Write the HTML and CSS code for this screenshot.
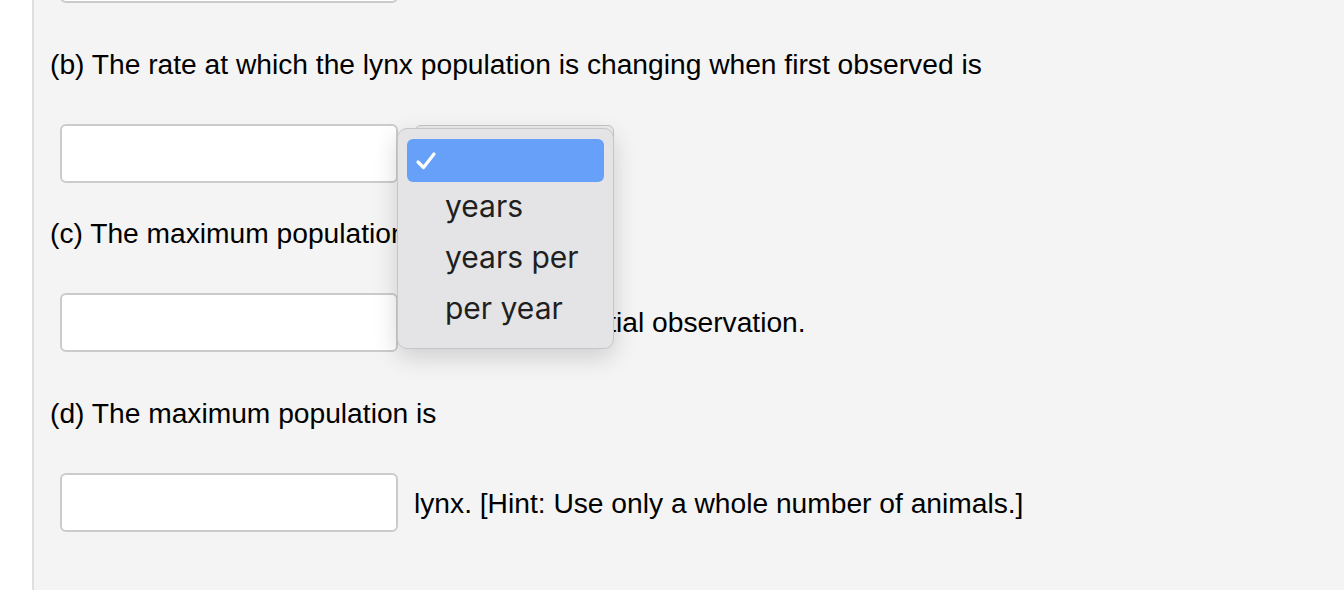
FILE: index.html
```html
<!DOCTYPE html>
<html lang="en">
<head>
    <meta charset="UTF-8">
    <meta name="viewport" content="width=device-width, initial-scale=1.0">
    <title>Lynx population</title>
    <link rel="stylesheet" href="styles.css">
</head>
<body>
    <div class="page">
        <div class="gutter"></div>

        <main class="panel">
            <div class="answer-row answer-row--cut">
                <input type="text" class="answer">
            </div>

            <p class="prompt">(b) The rate at which the lynx population is changing when first observed is</p>

            <div class="answer-row answer-row--menu">
                <input type="text" class="answer">
                <div class="unit-select">
                    <!-- open popup of the units select -->
                    <div class="unit-menu">
                        <div class="unit-option unit-option--checked">
                            <svg class="check" width="22" height="22" viewBox="0 0 22 22">
                                <path d="M3 12 L8.5 17.5 L19 4" fill="none" stroke="#fff" stroke-width="3.2" stroke-linecap="round" stroke-linejoin="round"/>
                            </svg>
                        </div>
                        <div class="unit-list">
                            <div class="unit-option">years</div>
                            <div class="unit-option">years per</div>
                            <div class="unit-option">per year</div>
                        </div>
                    </div>
                </div>
            </div>

            <p class="prompt">(c) The maximum population occurs</p>

            <div class="answer-row">
                <input type="text" class="answer">
                <span class="after after--under-menu">years after initial observation.</span>
            </div>

            <p class="prompt">(d) The maximum population is</p>

            <div class="answer-row">
                <input type="text" class="answer">
                <span class="after">lynx. [Hint: Use only a whole number of animals.]</span>
            </div>
        </main>
    </div>
</body>
</html>
```

FILE: styles.css
```css
* {
    margin: 0;
    padding: 0;
    box-sizing: border-box;
}

body {
    font-family: 'Liberation Sans', Arial, Helvetica, sans-serif;
    background: #fff;
    color: #000;
    height: 590px;
    overflow: hidden;
}

.page {
    display: flex;
    height: 590px;
}

.gutter {
    width: 34px;
    border-right: 2px solid #dfdfdf;
    background: #fff;
}

.panel {
    flex: 1;
    background: #f4f4f4;
    padding-left: 16px;
}

.prompt {
    font-size: 28.2px;
    line-height: 34px;
    margin-bottom: 43px;
}

.answer-row {
    display: flex;
    align-items: center;
    margin-bottom: 44px;
    padding-left: 10px;
}

.answer-row--cut {
    margin-top: -56px;
    margin-bottom: 44px;
}

.answer-row--menu {
    margin-bottom: 33px;
}

.answer {
    width: 338px;
    height: 59px;
    border: 2px solid #cbcbcb;
    border-radius: 6px;
    background: #fff;
    outline: none;
    flex-shrink: 0;
}

.after {
    font-size: 28.2px;
    line-height: 34px;
    margin-left: 16px;
    white-space: nowrap;
}

/* the start of this line sits under the open menu */
.after--under-menu {
    margin-left: 41px;
    margin-top: -2px;
}

.unit-select {
    position: relative;
    width: 199px;
    height: 58px;
    margin-left: 17px;
    align-self: flex-start;
    margin-top: 1px;
    border: 1px solid #c4c4c4;
    border-radius: 6px;
    background: #ececec;
}

.unit-menu {
    position: absolute;
    top: 2px;
    left: -19px;
    width: 217px;
    height: 221px;
    z-index: 5;
    background: #e4e4e6;
    border: 1px solid #c6c6c8;
    border-radius: 10px;
    box-shadow: 0 8px 24px rgba(0, 0, 0, 0.16);
    padding: 10px 9px 0;
}

.unit-option {
    font-family: Inter, 'Liberation Sans', sans-serif;
    font-size: 30px;
    line-height: 51px;
    height: 51px;
    padding-left: 38px;
    color: #1f1f1f;
    white-space: nowrap;
}

.unit-option--checked {
    height: 43px;
    padding-left: 8px;
    display: flex;
    align-items: center;
    background: #66a0f8;
    border-radius: 6px;
}

.unit-list {
    margin-top: -1px;
}

.check {
    display: block;
    margin-top: 1px;
}
```
